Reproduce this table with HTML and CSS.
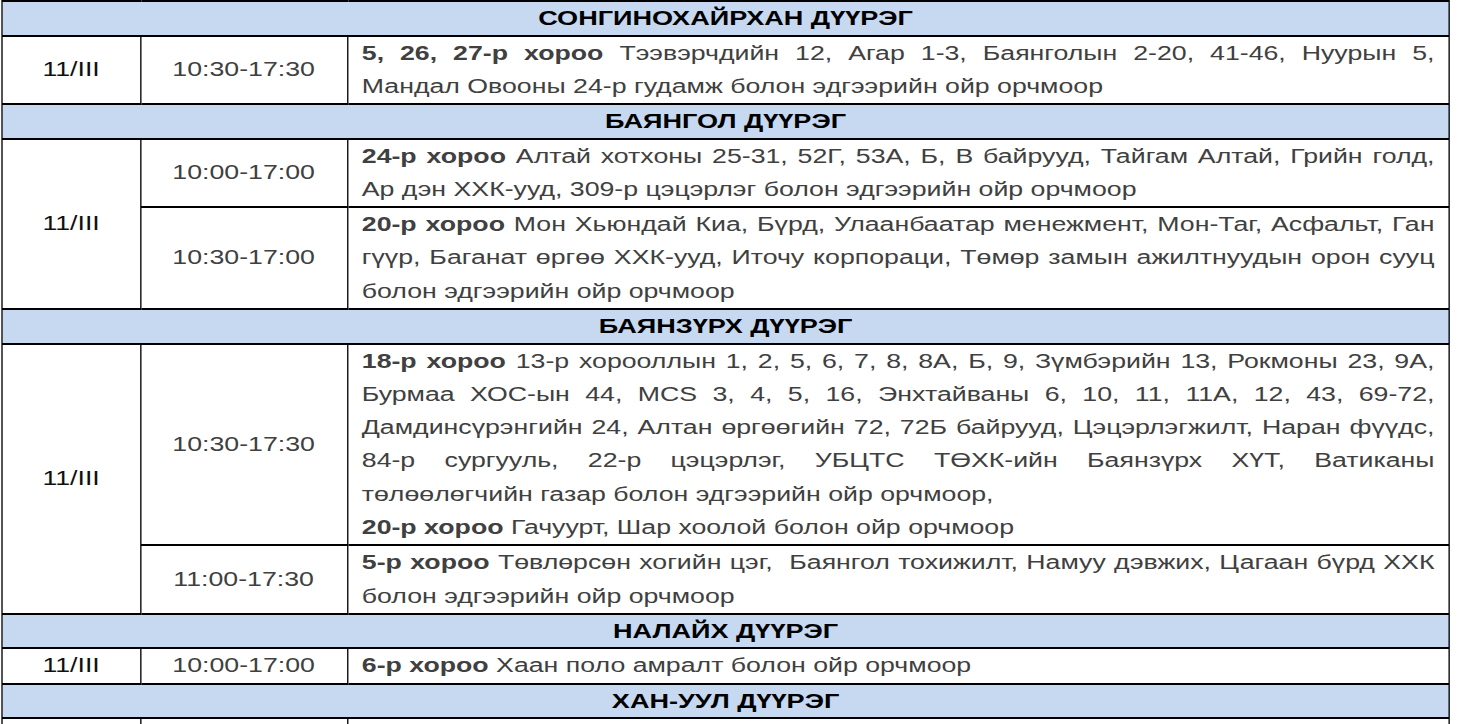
FILE: index.html
```html
<!DOCTYPE html>
<html lang="mn">
<head>
<meta charset="utf-8">
<title>Хуваарь</title>
<link rel="stylesheet" href="styles.css">
</head>
<body>
<div class="page">
<table class="schedule">
<colgroup><col class="c-date"><col class="c-time"><col class="c-place"></colgroup>
<tbody>
<tr class="row-cut"><td></td><td></td><td class="place">гудамж, Зүүн дөрвөн зам, Гурвалжингийн гүүр болон ойр орчмоор</td></tr>
<tr class="district"><td colspan="3">СОНГИНОХАЙРХАН ДҮҮРЭГ</td></tr>
<tr><td class="date">11/III</td><td class="time">10:30-17:30</td><td class="place"><b>5, 26, 27-р хороо</b> Тээвэрчдийн 12, Агар 1-3, Баянголын 2-20, 41-46, Нуурын 5, Мандал Овооны 24-р гудамж болон эдгээрийн ойр орчмоор</td></tr>
<tr class="district"><td colspan="3">БАЯНГОЛ ДҮҮРЭГ</td></tr>
<tr><td class="date" rowspan="2">11/III</td><td class="time">10:00-17:00</td><td class="place"><b>24-р хороо</b> Алтай хотхоны 25-31, 52Г, 53А, Б, В байрууд, Тайгам Алтай, Грийн голд, Ар дэн ХХК-ууд, 309-р цэцэрлэг болон эдгээрийн ойр орчмоор</td></tr>
<tr><td class="time">10:30-17:00</td><td class="place"><b>20-р хороо</b> Мон Хьюндай Киа, Бүрд, Улаанбаатар менежмент, Мон-Таг, Асфальт, Ган гүүр, Баганат өргөө ХХК-ууд, Иточу корпораци, Төмөр замын ажилтнуудын орон сууц болон эдгээрийн ойр орчмоор</td></tr>
<tr class="district"><td colspan="3">БАЯНЗҮРХ ДҮҮРЭГ</td></tr>
<tr><td class="date" rowspan="2">11/III</td><td class="time">10:30-17:30</td><td class="place"><b>18-р хороо</b> 13-р хорооллын 1, 2, 5, 6, 7, 8, 8А, Б, 9, Зүмбэрийн 13, Рокмоны 23, 9А, Бурмаа ХОС-ын 44, MCS 3, 4, 5, 16, Энхтайваны 6, 10, 11, 11А, 12, 43, 69-72, Дамдинсүрэнгийн 24, Алтан өргөөгийн 72, 72Б байрууд, Цэцэрлэгжилт, Наран фүүдс, 84-р сургууль, 22-р цэцэрлэг, УБЦТС ТӨХК-ийн Баянзүрх ХҮТ, Ватиканы төлөөлөгчийн газар болон эдгээрийн ойр орчмоор,<br><b>20-р хороо</b> Гачуурт, Шар хоолой болон ойр орчмоор</td></tr>
<tr><td class="time">11:00-17:30</td><td class="place"><b>5-р хороо</b> Төвлөрсөн хогийн цэг,&nbsp; Баянгол тохижилт, Намуу дэвжих, Цагаан бүрд ХХК болон эдгээрийн ойр орчмоор</td></tr>
<tr class="district"><td colspan="3">НАЛАЙХ ДҮҮРЭГ</td></tr>
<tr><td class="date">11/III</td><td class="time">10:00-17:00</td><td class="place"><b>6-р хороо</b> Хаан поло амралт болон ойр орчмоор</td></tr>
<tr class="district"><td colspan="3">ХАН-УУЛ ДҮҮРЭГ</td></tr>
<tr class="row-empty"><td class="date">&nbsp;</td><td class="time">&nbsp;</td><td class="place">&nbsp;</td></tr>
</tbody>
</table>
</div>
</body>
</html>
```

FILE: styles.css
```css
html, body {
  margin: 0;
  padding: 0;
  background: #ffffff;
}
body {
  width: 1458px;
  height: 724px;
  overflow: hidden;
}
.page {
  width: 1088px;
  margin-top: -26px;
  transform: scaleX(1.335);
  transform-origin: 0 0;
}
.schedule {
  width: 1085px;
  margin-left: 1px;
  border-collapse: collapse;
  table-layout: fixed;
  font-family: "Liberation Sans", Arial, sans-serif;
  font-size: 20px;
  line-height: 33.3px;
  color: #404040;
}
.c-date { width: 103.5px; }
.c-time { width: 155px; }
.schedule td {
  border: 2px solid #000;
  border-left-width: 1.5px;
  border-right-width: 1.5px;
  padding: 0 10.5px;
  vertical-align: middle;
}
.date {
  text-align: center;
  color: #111;
}
.time {
  text-align: center;
  color: #404040;
}
.place {
  text-align: justify;
}
.place b {
  font-weight: bold;
}
.district td {
  background: #c6d9f0;
  text-align: center;
  font-weight: bold;
  font-size: 20.3px;
  color: #000;
  line-height: 32.5px;
  padding: 0;
}
.row-cut td {
  line-height: 24px;
  vertical-align: bottom;
}
```
